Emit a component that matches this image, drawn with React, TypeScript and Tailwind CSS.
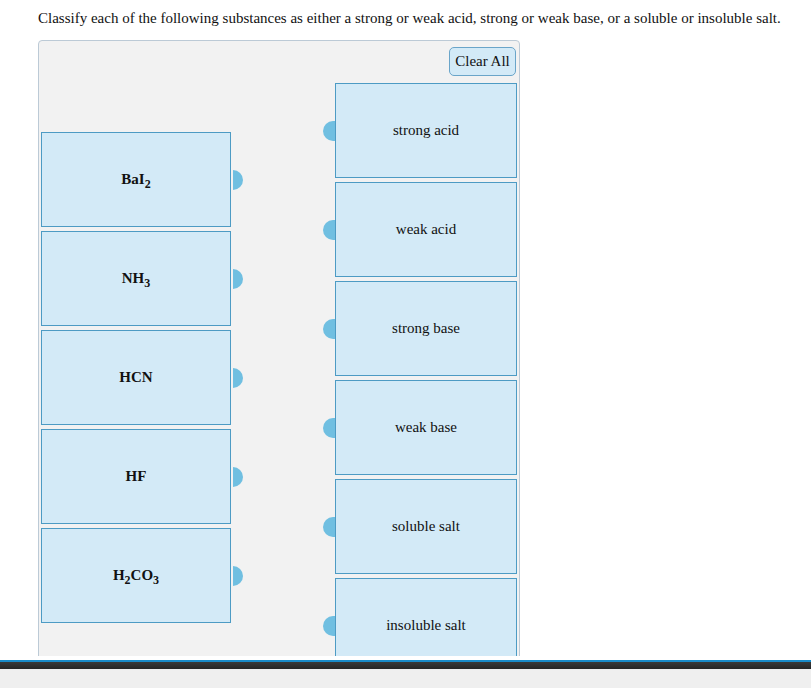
const serif = { fontFamily: '"Liberation Serif", "Times New Roman", serif' }

const Sub = ({ children }: { children: React.ReactNode }) => (
  <sub className="text-[12px] relative top-[4px]">{children}</sub>
)

const substances: { id: string; label: React.ReactNode }[] = [
  { id: 'bai2', label: <>BaI<Sub>2</Sub></> },
  { id: 'nh3', label: <>NH<Sub>3</Sub></> },
  { id: 'hcn', label: <>HCN</> },
  { id: 'hf', label: <>HF</> },
  { id: 'h2co3', label: <>H<Sub>2</Sub>CO<Sub>3</Sub></> },
]

const categories = ['strong acid', 'weak acid', 'strong base', 'weak base', 'soluble salt', 'insoluble salt']

export default function App() {
  return (
    <div className="w-[811px] h-[688px] overflow-hidden bg-white text-[#111]" style={serif}>
      <div className="h-[656px] overflow-hidden px-[38px]">
        <p className="pt-[9px] text-[15px] leading-[18px] whitespace-nowrap">
          Classify each of the following substances as either a strong or weak acid, strong or weak base, or a soluble or
          insoluble salt.
        </p>

        <div className="mt-[13px] w-[482px] h-[640px] rounded-t-[4px] border border-[#bccad6] bg-[#f2f2f2] px-[2px] flex">
          {/* draggable items */}
          <div className="mt-[91px] flex flex-col gap-[4px]">
            {substances.map((s) => (
              <div key={s.id} className="flex items-center">
                <div className="w-[190px] h-[95px] border border-[#4d9bc4] bg-[#d3eaf7] flex items-center justify-center text-[15px] font-bold">
                  <span>{s.label}</span>
                </div>
                <div className="ml-[2px] w-[10px] h-[20px] rounded-r-[10px] bg-[#70bfe1]" />
              </div>
            ))}
          </div>

          {/* targets */}
          <div className="ml-auto flex flex-col items-end">
            <button className="mt-[6px] mr-[1px] h-[29px] w-[67px] rounded-[5px] border border-[#6aa5c9] bg-[#d3eaf7] text-[15px] leading-none">
              Clear All
            </button>
            <div className="mt-[7px] flex flex-col gap-[4px]">
              {categories.map((c) => (
                <div key={c} className="flex items-center">
                  <div className="w-[12px] h-[20px] rounded-l-[10px] bg-[#70bfe1]" />
                  <div className="w-[182px] h-[95px] border border-[#4d9bc4] bg-[#d3eaf7] flex items-center justify-center text-[15px]">
                    {c}
                  </div>
                </div>
              ))}
            </div>
          </div>
        </div>
      </div>

      {/* bottom toolbar */}
      <div className="h-[4px] bg-white" />
      <div className="h-[2px] bg-[#1a8bc9]" />
      <div className="h-[7px] bg-gradient-to-b from-[#3a3a3a] to-[#262626]" />
      <div className="h-[19px] bg-[#efefef]" />
    </div>
  )
}
